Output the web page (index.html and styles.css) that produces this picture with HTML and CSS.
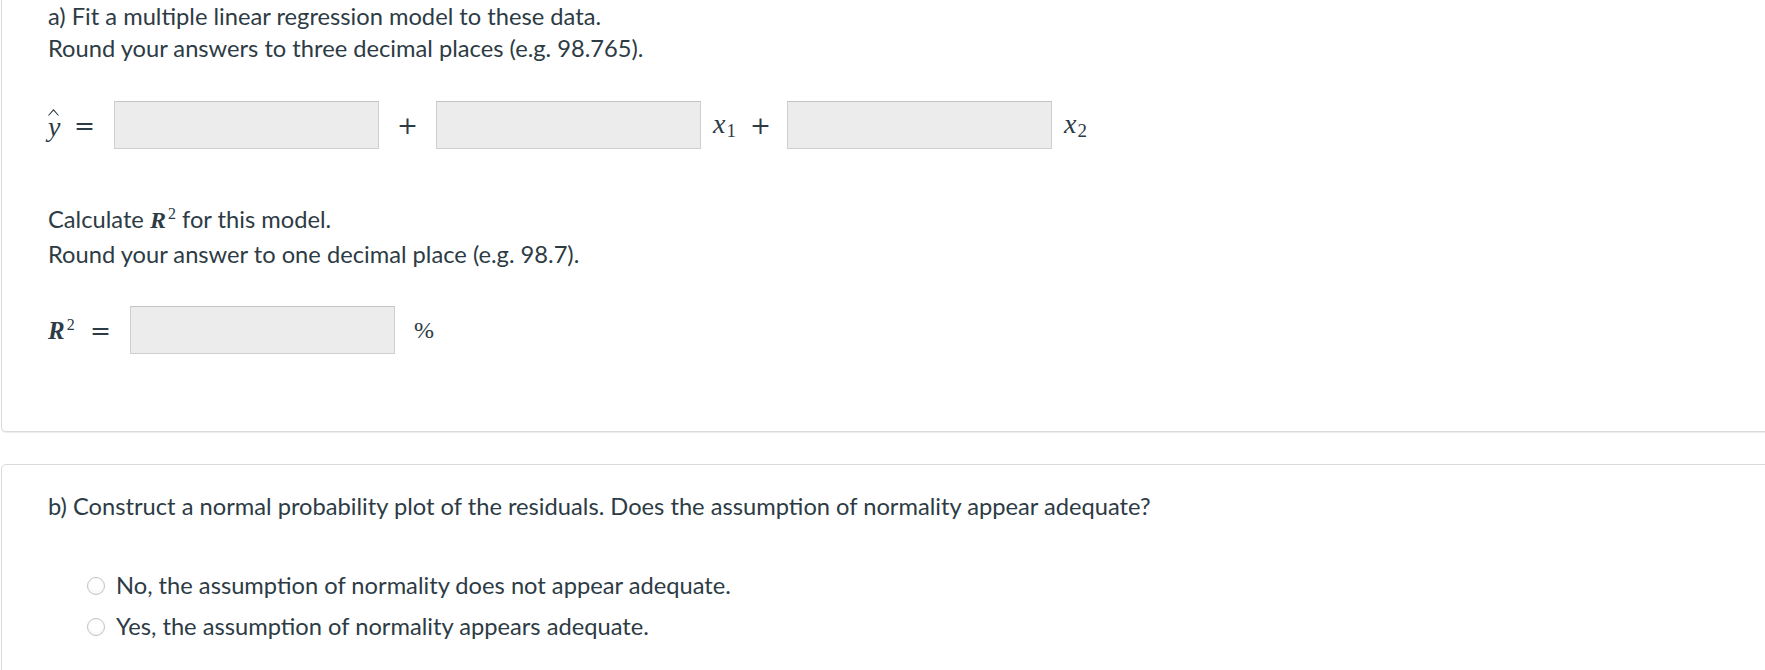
FILE: index.html
```html
<!DOCTYPE html>
<html>
<head>
<meta charset="utf-8">
<link rel="stylesheet" href="styles.css">
</head>
<body>
<div class="page">
  <section class="card card-a">
    <p class="text">a) Fit a multiple linear regression model to these data.<br>Round your answers to three decimal places (e.g. 98.765).</p>
    <div class="eq">
      <span class="math yhat">y<svg class="hat" width="11" height="7" viewBox="0 0 11 7"><path d="M0.5 6.5 L5.5 0.8 L10.5 6.5" fill="none" stroke="#2d3b45" stroke-width="1.1"/></svg></span>
      <span class="op eqsign">=</span>
      <span class="box"></span>
      <span class="op plus">+</span>
      <span class="box"></span>
      <span class="math var var1">x<sub>1</sub></span>
      <span class="op plus2">+</span>
      <span class="box"></span>
      <span class="math var">x<sub>2</sub></span>
    </div>
    <p class="text text-2">Calculate <span class="rsym">R<sup>2</sup></span> for this model.<br>Round your answer to one decimal place (e.g. 98.7).</p>
    <div class="eq eq-r">
      <span class="rsym rbig">R<sup>2</sup></span>
      <span class="op eqsign-r">=</span>
      <span class="box"></span>
      <span class="pct">%</span>
    </div>
  </section>
  <section class="card card-b">
    <p class="text">b) Construct a normal probability plot of the residuals. Does the assumption of normality appear adequate?</p>
    <div class="options">
      <label class="option"><span class="radio"></span>No, the assumption of normality does not appear adequate.</label>
      <label class="option"><span class="radio"></span>Yes, the assumption of normality appears adequate.</label>
    </div>
  </section>
</div>
</body>
</html>
```

FILE: styles.css
```css
html, body {
  margin: 0;
  padding: 0;
  background: #ffffff;
  overflow: hidden;
}
body {
  font-family: Lato, "Open Sans", sans-serif;
  color: #2d3b45;
  font-size: 23.7px;
}
.page {
  padding-left: 1px;
  width: 1830px;
}
.card {
  border: 1px solid #dadada;
  border-radius: 5px;
  padding-left: 46px;
  background: #fff;
}
.card-a {
  border-top: none;
  border-top-left-radius: 0;
  border-top-right-radius: 0;
  padding-top: 0;
  padding-bottom: 77px;
  box-shadow: 0 1px 0 #ececec;
}
.card-b {
  margin-top: 32px;
  padding-top: 25px;
  height: 300px;
}
.text {
  margin: 0;
  line-height: 32px;
}
.text-2 {
  margin-top: 48px;
  line-height: 34px;
}
.eq {
  display: flex;
  align-items: center;
  height: 48px;
  margin-top: 37px;
}
.eq-r {
  margin-top: 35px;
}
.math {
  font-family: "Liberation Serif", "DejaVu Serif", serif;
  font-size: 28px;
  color: #2d3b45;
}
.yhat {
  font-style: italic;
  position: relative;
  width: 26px;
  flex: none;
  margin-top: 4px;
}
.hat {
  position: absolute;
  left: 0;
  top: -2px;
}
.op {
  font-family: "DejaVu Serif", "Liberation Serif", serif;
  font-size: 25px;
  font-weight: normal;
  color: #2d3b45;
  flex: none;
}
.eqsign { width: 40px; }
.plus { width: 57px; text-align: center; }
.plus2 { width: 37px; }
.var {
  font-style: italic;
  margin-left: 12px;
}
.var1 {
  width: 37px;
  flex: none;
}
.var sub {
  font-style: normal;
  font-size: 19px;
  vertical-align: -4px;
  margin-left: 1px;
}
.box {
  box-sizing: border-box;
  width: 265px;
  height: 48px;
  background: #ececec;
  border: 1px solid #cfcfcf;
  border-top-color: #c4c4c4;
  flex: none;
}
.rsym {
  font-family: "Liberation Serif", "DejaVu Serif", serif;
  font-style: italic;
  font-weight: bold;
  font-size: 24px;
}
.rsym sup {
  font-style: normal;
  font-weight: normal;
  font-size: 16px;
  vertical-align: 9px;
  margin-left: 2px;
}
.rbig {
  width: 42px;
  flex: none;
  font-size: 25px;
}
.eqsign-r { width: 40px; }
.pct {
  margin-left: 19px;
  font-family: "Liberation Serif", "DejaVu Serif", serif;
  font-size: 24px;
}
.options {
  margin-top: 43px;
}
.option {
  display: flex;
  align-items: center;
  height: 41px;
  line-height: 41px;
  padding-left: 39px;
}
.radio {
  box-sizing: border-box;
  width: 18px;
  height: 18px;
  border-radius: 50%;
  border: 1px solid #c3c3c3;
  background: radial-gradient(circle at 50% 40%, #ffffff 40%, #f1f1f1 100%);
  margin-right: 11px;
  flex: none;
}
```
